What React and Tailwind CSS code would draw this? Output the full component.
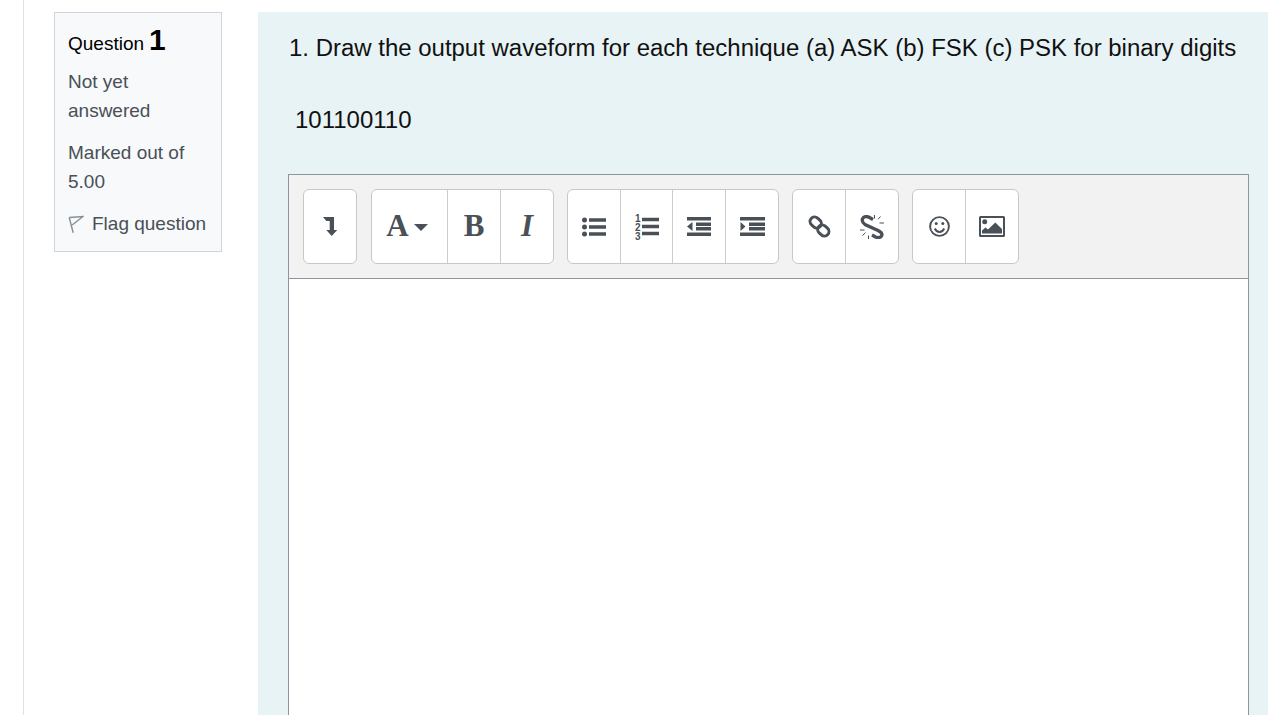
const ink = "#495057";

function Collapse() {
  return (
    <svg width="15" height="19" viewBox="0 0 15 19" fill={ink}>
      <path d="M0 0H11V13H14.300L8.700 19L3.300 13H6.700V4H3.300z" />
    </svg>
  );
}

function Bullets() {
  return (
    <svg width="24" height="20" viewBox="0 0 24 20" fill={ink}>
      <circle cx="2.500" cy="3" r="2.500" />
      <circle cx="2.500" cy="10" r="2.500" />
      <circle cx="2.500" cy="17" r="2.500" />
      <path d="M7 1.200h17v3.600H7zM7 8.200h17v3.600H7zM7 15.200h17v3.600H7z" />
    </svg>
  );
}

function Numbers() {
  return (
    <svg width="24" height="26" viewBox="0 0 24 26" fill={ink}>
      <path d="M7 3.700h17v3.600H7zM7 10.700h17v3.600H7zM7 17.700h17v3.600H7z" />
      <text x="0" y="8" fontSize="10" fontWeight="700" fontFamily="Liberation Sans, sans-serif">1</text>
      <text x="0" y="16.500" fontSize="10" fontWeight="700" fontFamily="Liberation Sans, sans-serif">2</text>
      <text x="0" y="25.500" fontSize="10" fontWeight="700" fontFamily="Liberation Sans, sans-serif">3</text>
    </svg>
  );
}

function Outdent() {
  return (
    <svg width="24" height="19" viewBox="0 0 24 19" fill={ink}>
      <path d="M0 0h24v3.600H0zM0 15.400h24v3.600H0zM9 5.500h15v3.600H9zM9 10h15v3.500H9zM5.500 5v9L0 9.500z" />
    </svg>
  );
}

function Indent() {
  return (
    <svg width="25" height="19" viewBox="0 0 25 19" fill={ink}>
      <path d="M0 0h25v3.600H0zM0 15.400h25v3.600H0zM9 5.500h16v3.600H9zM9 10h16v3.500H9zM.5 5v9L5.500 9.500z" />
    </svg>
  );
}

function LinkIcon() {
  return (
    <svg width="23" height="23" viewBox="0 0 23 23" fill="none" stroke={ink} strokeWidth="3">
      <rect x="1.700" y="3" width="12" height="9" rx="4.500" transform="rotate(42 7.700 7.500)" />
      <rect x="9.300" y="11" width="12" height="9" rx="4.500" transform="rotate(42 15.300 15.500)" />
    </svg>
  );
}

function UnlinkIcon() {
  return (
    <svg width="24" height="24" viewBox="0 0 24 24" fill="none" stroke={ink} strokeWidth="3.300">
      <path d="M13 4.500 9.500 2.500C6.500.9 3.500 1.500 2.500 3.800 1.500 6.500 3 8 5 9.500L18 15.500C21 17 22.500 18.500 21.800 20.500 21 22.800 18 23 15.500 22L12 20" />
      <path d="M14.500 0v3.500M20.500 1.500 18 4.300M24 8h-4.500M0 15h4.500M2.500 20.500l3-2.800M8.500 24v-3.500" strokeWidth="1" />
    </svg>
  );
}

function Smile() {
  return (
    <svg width="21" height="21" viewBox="0 0 21 21" fill="none" stroke={ink} strokeWidth="1.900">
      <circle cx="10.500" cy="10.500" r="9.400" />
      <path d="M5.800 12.500c1 2.300 2.800 3.500 4.700 3.500s3.700-1.200 4.700-3.500" />
      <circle cx="7.200" cy="7.600" r="1.500" fill={ink} stroke="none" />
      <circle cx="13.800" cy="7.600" r="1.500" fill={ink} stroke="none" />
    </svg>
  );
}

function Picture() {
  return (
    <svg width="26" height="21" viewBox="0 0 26 21" fill={ink}>
      <path fillRule="evenodd" d="M1.500 0h23A1.500 1.500 0 0 1 26 1.500v18a1.500 1.500 0 0 1-1.500 1.500h-23A1.500 1.500 0 0 1 0 19.500v-18A1.500 1.500 0 0 1 1.500 0zm.5 2v17h22V2z" />
      <circle cx="5.700" cy="5.700" r="2.500" />
      <path d="M3 17.500v-3l3.500-3 2.500 2 7.300-7L23 13v4.500z" />
    </svg>
  );
}

function Flag() {
  return (
    <svg width="16" height="20" viewBox="0 0 16 20" fill="none" stroke="#868e96" strokeWidth="1.400">
      <path d="M1.200 3.500 15 2.500 4.200 11M1.200 3.500 5.200 18.800" />
    </svg>
  );
}

function ToolButton({ children, width = "w-[53px]", className = "" }) {
  return <div className={`flex h-full items-center justify-center border-l border-[#cccccc] first:border-l-0 ${width} ${className}`}>{children}</div>;
}

function ToolGroup({ children, className = "" }) {
  return <div className={`flex h-[75px] overflow-hidden rounded-[6px] border border-[#c8c8c8] bg-white ${className}`}>{children}</div>;
}

export default function App() {
  return (
    <div className="flex h-[715px] overflow-hidden bg-white pt-3 font-['Liberation_Sans',Arial,sans-serif]">
      <div className="-mt-3 ml-[23px] w-px shrink-0 bg-[#dee2e6]" />

      <aside className="ml-[30px] h-[240px] w-[168px] shrink-0 border border-[#ced4da] bg-[#f8f9fa] px-[13px] pt-[9px] text-[19px] leading-[29px] text-[#495057]">
        <h3 className="flex items-baseline gap-[5px] leading-[36px] text-black">
          <span>Question</span>
          <span className="text-[30px] font-bold">1</span>
        </h3>
        <p className="mt-[5px]">Not yet answered</p>
        <p className="mt-[13px]">Marked out of 5.00</p>
        <p className="mt-[13px] flex items-center gap-[8px] whitespace-nowrap">
          <Flag />
          Flag question
        </p>
      </aside>

      <main className="ml-9 flex-1 bg-[#e7f3f5] pl-[30px] pr-[19px] pt-[18px] text-[#111111]">
        <p className="pl-px text-[23.970px] leading-[36px] whitespace-nowrap">1. Draw the output waveform for each technique (a) ASK (b) FSK (c) PSK for binary digits</p>
        <p className="mt-9 pl-[7px] text-[24px] leading-[36px]">101100110</p>

        <div className="mt-9 border border-[#8f959e] bg-white">
          <div className="flex h-[104px] items-start gap-[13px] border-b border-[#8f959e] bg-[#f2f2f2] pl-[14px] pt-[14px]">
            <ToolGroup className="mr-px">
              <ToolButton width="w-[52px]"><Collapse /></ToolButton>
            </ToolGroup>
            <ToolGroup>
              <ToolButton width="w-[75px]" className="gap-[5px] pr-[5px] font-['Liberation_Serif',serif] text-[31px] font-bold text-[#495057]">
                A
                <span className="mt-0.5 h-0 w-0 border-x-[7px] border-t-[7px] border-x-transparent border-t-[#495057]" />
              </ToolButton>
              <ToolButton className="font-['Liberation_Serif',serif] text-[31px] font-bold text-[#495057]">B</ToolButton>
              <ToolButton className="font-['Liberation_Serif',serif] text-[31px] font-bold italic text-[#495057]">I</ToolButton>
            </ToolGroup>
            <ToolGroup>
              <ToolButton width="w-[52px]"><Bullets /></ToolButton>
              <ToolButton width="w-[52px]"><Numbers /></ToolButton>
              <ToolButton><Outdent /></ToolButton>
              <ToolButton><Indent /></ToolButton>
            </ToolGroup>
            <ToolGroup>
              <ToolButton width="w-[52px]"><LinkIcon /></ToolButton>
              <ToolButton><UnlinkIcon /></ToolButton>
            </ToolGroup>
            <ToolGroup>
              <ToolButton width="w-[52px]"><Smile /></ToolButton>
              <ToolButton><Picture /></ToolButton>
            </ToolGroup>
          </div>
          <div className="h-[500px]" />
        </div>
      </main>
    </div>
  );
}
